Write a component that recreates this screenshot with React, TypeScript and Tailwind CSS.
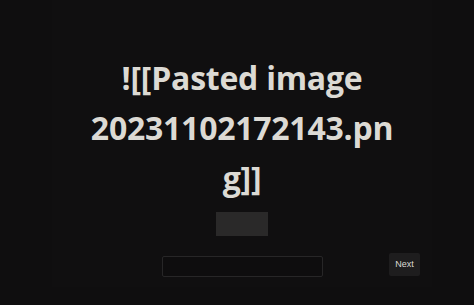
export default function App() {
  return (
    <div className="h-[305px] w-[474px] overflow-hidden bg-[#0f0e0f] font-['Open_Sans',sans-serif]">
      <div className="ml-[52px] flex h-[287px] w-[380px] flex-col items-center bg-[#100f10] pt-[53px]">
        {/* Card front: the unresolved embed text */}
        <div className="w-[310px] text-center text-[32px] font-bold leading-[50px] tracking-[-0.25px] break-words text-[#dcdad4] [overflow-wrap:anywhere]">
          ![[Pasted image 20231102172143.png]]
        </div>
        <div className="mt-[9px] h-[24px] w-[52px] bg-[#2a2929]" />

        {/* Answer row */}
        <div className="mt-[17px] flex w-full items-center">
          <input
            type="text"
            className="ml-[110px] h-[21px] w-[161px] rounded-[2px] border border-[#272627] bg-[#0e0d0e] outline-none"
          />
          <button
            type="button"
            className="ml-auto mr-[12px] mb-[4px] h-[23px] w-[31px] rounded-[2px] bg-[#1e1d1e] text-[9px] text-[#dcdad4] font-['Liberation_Sans',sans-serif]"
          >
            Next
          </button>
        </div>
      </div>
    </div>
  )
}
